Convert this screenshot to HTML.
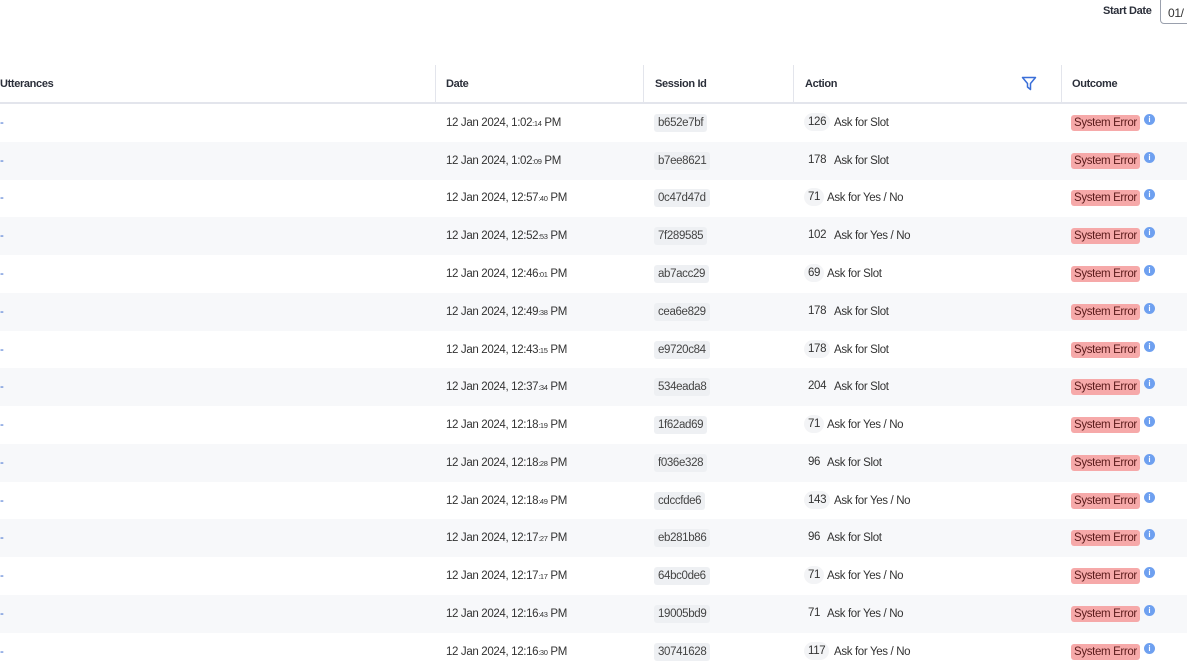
<!DOCTYPE html>
<html><head><meta charset="utf-8"><style>
*{box-sizing:border-box;margin:0;padding:0}
body{width:1187px;height:671px;overflow:hidden;background:#fff;font-family:"Liberation Sans",sans-serif;color:#333;font-size:11.5px;letter-spacing:-0.35px;position:relative}
.sd{position:absolute;left:1103px;top:5px;font-weight:bold;font-size:11px;color:#2b2f3a}
.inp{position:absolute;left:1160px;top:-3px;width:40px;height:27px;border:1px solid #9aa0ad;border-radius:4px;padding:8px 0 0 7px;font-size:12px;color:#333;background:#fff}
.hd{position:absolute;left:0;top:65px;width:1187px;height:39px;border-bottom:2px solid #e3e5ec}
.hd div{position:absolute;top:13px;font-weight:bold;font-size:11px;color:#2b2f3a}
.vl{position:absolute;top:65px;height:38px;width:1px;background:#e3e5ec}
.r{position:absolute;left:0;width:1187px;height:38px}
.r.g{background:#f7f8fa}
.r span{position:absolute;top:13px;white-space:nowrap}
.d{left:0;color:#3366cc}
.dt{left:446px}
.dt small{font-size:7.5px}
.s{left:654px!important;top:10px!important;background:#eef0f3;border-radius:3px;padding:3px 4px;color:#444}
.n{left:804px!important;top:9px!important;background:#f3f4f6;border-radius:10px;padding:3px 4px}
.g .n{background:transparent}
.o{left:1071px!important;top:11px!important;background:#f6a9a9;border-radius:3px;padding:2px 3px;color:#5a1a1a;font-size:11.5px}
.i{left:1144px!important;top:10px!important;width:11px;height:11px;border-radius:50%;background:#6ea0f0;color:#fff;font-size:8px;font-weight:bold;text-align:center;line-height:11px;letter-spacing:0}
</style></head><body>
<div class="sd">Start Date</div>
<div class="inp">01/</div>
<div class="hd">
<div style="left:0">Utterances</div>
<div style="left:446px">Date</div>
<div style="left:655px">Session Id</div>
<div style="left:805px">Action</div>
<div style="left:1072px">Outcome</div>
<svg style="position:absolute;left:1021px;top:11px" width="16" height="15" viewBox="0 0 16 15"><path d="M1.5 1.5H14.5L9.5 7.5V13.5L6.5 11V7.5Z" fill="none" stroke="#3a6fd8" stroke-width="1.5" stroke-linejoin="round"/></svg>
</div>
<div class="vl" style="left:435px"></div><div class="vl" style="left:643px"></div><div class="vl" style="left:793px"></div><div class="vl" style="left:1061px"></div>

<div class="r" style="top:104px"><span class="d">-</span><span class="dt">12 Jan 2024, 1:02<small>:14</small> PM</span><span class="s">b652e7bf</span><span class="n">126</span><span style="left:834px">Ask for Slot</span><span class="o">System Error</span><span class="i">i</span></div>
<div class="r g" style="top:142px"><span class="d">-</span><span class="dt">12 Jan 2024, 1:02<small>:09</small> PM</span><span class="s">b7ee8621</span><span class="n">178</span><span style="left:834px">Ask for Slot</span><span class="o">System Error</span><span class="i">i</span></div>
<div class="r" style="top:179px"><span class="d">-</span><span class="dt">12 Jan 2024, 12:57<small>:40</small> PM</span><span class="s">0c47d47d</span><span class="n">71</span><span style="left:827px">Ask for Yes / No</span><span class="o">System Error</span><span class="i">i</span></div>
<div class="r g" style="top:217px"><span class="d">-</span><span class="dt">12 Jan 2024, 12:52<small>:53</small> PM</span><span class="s">7f289585</span><span class="n">102</span><span style="left:834px">Ask for Yes / No</span><span class="o">System Error</span><span class="i">i</span></div>
<div class="r" style="top:255px"><span class="d">-</span><span class="dt">12 Jan 2024, 12:46<small>:01</small> PM</span><span class="s">ab7acc29</span><span class="n">69</span><span style="left:827px">Ask for Slot</span><span class="o">System Error</span><span class="i">i</span></div>
<div class="r g" style="top:293px"><span class="d">-</span><span class="dt">12 Jan 2024, 12:49<small>:38</small> PM</span><span class="s">cea6e829</span><span class="n">178</span><span style="left:834px">Ask for Slot</span><span class="o">System Error</span><span class="i">i</span></div>
<div class="r" style="top:331px"><span class="d">-</span><span class="dt">12 Jan 2024, 12:43<small>:15</small> PM</span><span class="s">e9720c84</span><span class="n">178</span><span style="left:834px">Ask for Slot</span><span class="o">System Error</span><span class="i">i</span></div>
<div class="r g" style="top:368px"><span class="d">-</span><span class="dt">12 Jan 2024, 12:37<small>:34</small> PM</span><span class="s">534eada8</span><span class="n">204</span><span style="left:834px">Ask for Slot</span><span class="o">System Error</span><span class="i">i</span></div>
<div class="r" style="top:406px"><span class="d">-</span><span class="dt">12 Jan 2024, 12:18<small>:19</small> PM</span><span class="s">1f62ad69</span><span class="n">71</span><span style="left:827px">Ask for Yes / No</span><span class="o">System Error</span><span class="i">i</span></div>
<div class="r g" style="top:444px"><span class="d">-</span><span class="dt">12 Jan 2024, 12:18<small>:28</small> PM</span><span class="s">f036e328</span><span class="n">96</span><span style="left:827px">Ask for Slot</span><span class="o">System Error</span><span class="i">i</span></div>
<div class="r" style="top:482px"><span class="d">-</span><span class="dt">12 Jan 2024, 12:18<small>:49</small> PM</span><span class="s">cdccfde6</span><span class="n">143</span><span style="left:834px">Ask for Yes / No</span><span class="o">System Error</span><span class="i">i</span></div>
<div class="r g" style="top:519px"><span class="d">-</span><span class="dt">12 Jan 2024, 12:17<small>:27</small> PM</span><span class="s">eb281b86</span><span class="n">96</span><span style="left:827px">Ask for Slot</span><span class="o">System Error</span><span class="i">i</span></div>
<div class="r" style="top:557px"><span class="d">-</span><span class="dt">12 Jan 2024, 12:17<small>:17</small> PM</span><span class="s">64bc0de6</span><span class="n">71</span><span style="left:827px">Ask for Yes / No</span><span class="o">System Error</span><span class="i">i</span></div>
<div class="r g" style="top:595px"><span class="d">-</span><span class="dt">12 Jan 2024, 12:16<small>:43</small> PM</span><span class="s">19005bd9</span><span class="n">71</span><span style="left:827px">Ask for Yes / No</span><span class="o">System Error</span><span class="i">i</span></div>
<div class="r" style="top:633px"><span class="d">-</span><span class="dt">12 Jan 2024, 12:16<small>:30</small> PM</span><span class="s">30741628</span><span class="n">117</span><span style="left:834px">Ask for Yes / No</span><span class="o">System Error</span><span class="i">i</span></div>
</body></html>
